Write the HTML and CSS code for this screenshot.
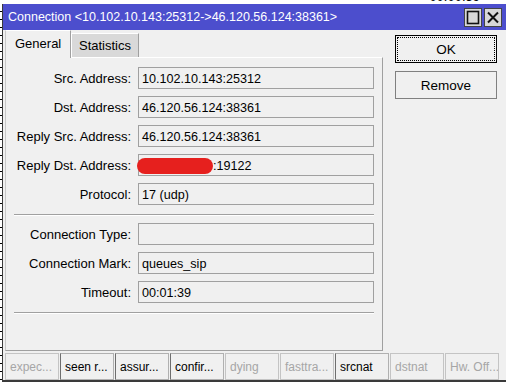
FILE: index.html
```html
<!DOCTYPE html>
<html>
<head>
<meta charset="utf-8">
<link rel="stylesheet" href="styles.css">
</head>
<body>
<div class="desk-top"><span class="under-clock">00:00:59</span></div>
<div class="desk">
  <div class="under-list"></div>
  <div class="window">
    <div class="titlebar">
      <span class="title">Connection &lt;10.102.10.143:25312-&gt;46.120.56.124:38361&gt;</span>
      <div class="tb-buttons">
        <span class="tb-btn">
          <svg width="18" height="19" viewBox="0 0 18 19"><rect x="0.5" y="0.5" width="17" height="18" fill="#d8d8d8" stroke="#444"/><rect x="3.5" y="3.5" width="11" height="12" fill="none" stroke="#111" stroke-width="1.6"/></svg>
        </span>
        <span class="tb-btn">
          <svg width="18" height="19" viewBox="0 0 18 19"><rect x="0.5" y="0.5" width="17" height="18" fill="#d8d8d8" stroke="#444"/><path d="M4 4.5 L14 14.5 M14 4.5 L4 14.5" stroke="#111" stroke-width="2" fill="none"/></svg>
        </span>
      </div>
    </div>
    <div class="main">
      <div class="left">
        <div class="tabs">
          <div class="tab active">General</div>
          <div class="tab">Statistics</div>
        </div>
        <div class="panel">
          <div class="group">
            <div class="label">Src. Address:</div><div class="field">10.102.10.143:25312</div>
            <div class="label">Dst. Address:</div><div class="field">46.120.56.124:38361</div>
            <div class="label">Reply Src. Address:</div><div class="field">46.120.56.124:38361</div>
            <div class="label">Reply Dst. Address:</div><div class="field"><span class="redact"></span>:19122</div>
            <div class="label">Protocol:</div><div class="field">17 (udp)</div>
          </div>
          <div class="sep"></div>
          <div class="group">
            <div class="label">Connection Type:</div><div class="field"></div>
            <div class="label">Connection Mark:</div><div class="field">queues_sip</div>
            <div class="label">Timeout:</div><div class="field">00:01:39</div>
          </div>
          <div class="sep"></div>
        </div>
      </div>
      <div class="actions">
        <button class="btn default"><span class="focus">OK</span></button>
        <button class="btn">Remove</button>
      </div>
    </div>
    <div class="status">
      <div class="cell off">expec...</div>
      <div class="cell on">seen r...</div>
      <div class="cell on">assur...</div>
      <div class="cell on">confir...</div>
      <div class="cell off">dying</div>
      <div class="cell off">fasttra...</div>
      <div class="cell on">srcnat</div>
      <div class="cell off">dstnat</div>
      <div class="cell off">Hw. Off...</div>
    </div>
  </div>
</div>
</body>
</html>
```

FILE: styles.css
```css
* { box-sizing: border-box; }
html, body {
  margin: 0;
  padding: 0;
  width: 506px;
  height: 383px;
  overflow: hidden;
  background: #fff;
  font-family: "Liberation Sans", Arial, sans-serif;
  font-size: 13px;
  color: #000;
}
.desk-top {
  height: 4px;
  overflow: hidden;
  display: flex;
  justify-content: flex-end;
  padding-right: 26px;
}
.under-clock {
  display: block;
  font-size: 13px;
  line-height: 13px;
  margin-top: -10px;
  color: #000;
}
.desk {
  display: flex;
}
.under-list {
  width: 2px;
  height: 378px;
  background: repeating-linear-gradient(to bottom, #fff 0 7px, #000 7px 8px);
}
.window {
  width: 504px;
  border-left: 1px solid #3a3a3a;
  border-bottom: 2px solid #3a3a3a;
  background: #f0f0f0;
}
.titlebar {
  height: 26px;
  background: #4c4ecd;
  display: flex;
  align-items: center;
  justify-content: space-between;
  padding: 0 4px 0 5px;
}
.title {
  color: #fff;
  font-size: 12.5px;
  white-space: nowrap;
}
.tb-buttons {
  display: flex;
  gap: 2px;
  padding-top: 1px;
}
.tb-btn {
  display: block;
  width: 18px;
  height: 19px;
}
.tb-btn svg { display: block; }
.main {
  display: flex;
  height: 321px;
}
.left {
  padding-left: 2px;
  display: flex;
  flex-direction: column;
}
.tabs {
  display: flex;
  align-items: flex-end;
  height: 27px;
}
.tab {
  height: 24px;
  padding: 0 7px 0 7px;
  display: flex;
  align-items: center;
  background: #d9d9d9;
  border-top: 1px solid #fff;
  border-left: 1px solid #fff;
  border-right: 1px solid #a0a0a0;
  white-space: nowrap;
}
.tab.active {
  height: 28px;
  margin-bottom: -1px;
  position: relative;
  z-index: 1;
  background: #f0f0f0;
  border-left: 1px solid #c8c8c8;
  padding: 0 0 3px 9px;
  width: 66px;
}
.panel {
  width: 378px;
  height: 294px;
  border-top: 1px solid #fff;
  border-left: 1px solid #c8c8c8;
  border-right: 1px solid #a0a0a0;
  border-bottom: 1px solid #a0a0a0;
  padding-top: 9px;
}
.group {
  display: grid;
  grid-template-columns: 125px 236px;
  column-gap: 7px;
  row-gap: 7px;
}
.label {
  height: 22px;
  display: flex;
  align-items: center;
  justify-content: flex-end;
  white-space: nowrap;
  padding-top: 1px;
}
.field {
  height: 22px;
  border: 1px solid #a0a0a0;
  background: #f0f0f0;
  display: flex;
  align-items: center;
  padding-left: 3px;
  padding-top: 1px;
  white-space: nowrap;
  font-size: 12.6px;
}
.redact {
  display: inline-block;
  width: 76px;
  height: 16px;
  border-radius: 8px;
  background: #e6201e;
  margin-left: -5px;
}
.sep {
  width: 360px;
  height: 2px;
  margin: 9px 0 7px 8px;
  border-top: 1px solid #a0a0a0;
  border-bottom: 1px solid #fff;
}
.actions {
  margin-left: 12px;
  padding-top: 5px;
  display: flex;
  flex-direction: column;
  gap: 8px;
}
.btn {
  width: 102px;
  height: 28px;
  font-family: "Liberation Sans", Arial, sans-serif;
  font-size: 13.5px;
  color: #000;
  background: #f0f0f0;
  border: 1px solid #808080;
  padding: 0;
  display: flex;
  align-items: center;
  justify-content: center;
}
.btn.default {
  border: 1px solid #000;
  padding: 1px;
}
.focus {
  width: 100%;
  height: 100%;
  border: 1px dotted #000;
  display: flex;
  align-items: center;
  justify-content: center;
}
.status {
  margin-top: 2px;
  padding-left: 2px;
  display: flex;
  gap: 1px;
}
.cell {
  width: 54px;
  height: 27px;
  display: flex;
  align-items: center;
  padding-left: 4px;
  white-space: nowrap;
  overflow: hidden;
  font-size: 12px;
}
.cell.off {
  color: #a6a6a6;
  border: 1px solid #c4c4c4;
}
.cell.on {
  color: #000;
  border: 1px solid #b0b0b0;
  border-left-color: #6e6e6e;
}
```
